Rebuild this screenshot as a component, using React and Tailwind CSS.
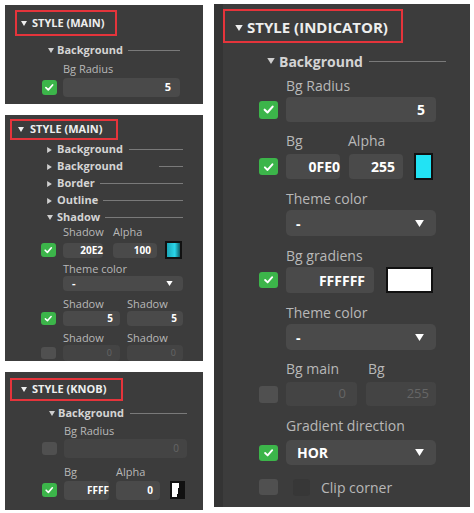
import React from "react";

const font = { fontFamily: '"Open Sans", "Noto Sans", sans-serif' };

function DownTri({ className }) {
    return (
        <svg viewBox="0 0 10 8" className={className}>
            <polygon points="0,0 10,0 5,8" fill="currentColor" />
        </svg>
    );
}

function RightTri({ className }) {
    return (
        <svg viewBox="0 0 8 10" className={className}>
            <polygon points="0,0 8,5 0,10" fill="currentColor" />
        </svg>
    );
}

function Check({ on, className }) {
    if (!on) {
        return <div className={"shrink-0 rounded-[3px] bg-[#505050] " + className} />;
    }
    return (
        <div className={"flex shrink-0 items-center justify-center rounded-[3px] bg-[#3cb54a] " + className}>
            <svg viewBox="0 0 12 12" className="h-[70%] w-[70%]">
                <path d="M2.2 6.4 L4.9 9 L9.8 3.4" fill="none" stroke="white" strokeWidth="2" strokeLinecap="round" strokeLinejoin="round" />
            </svg>
        </div>
    );
}

function Field({ value, className, dim }) {
    return (
        <div className={"flex shrink-0 items-center justify-end rounded-[4px] " + (dim ? "bg-[#444444] text-[#666666] font-normal " : "bg-[#4a4a4a] text-white font-bold ") + className}>
            {value}
        </div>
    );
}

function Folder({ label, open, rowClass, triClass, textClass, lineClass }) {
    return (
        <div className={"flex items-center " + rowClass}>
            {open ? <DownTri className={"shrink-0 text-[#cfcfcf] " + triClass} /> : <RightTri className={"shrink-0 text-[#cfcfcf] " + triClass} />}
            <span className={"font-bold text-[#d4d4d4] " + textClass}>{label}</span>
            <div className={"h-px flex-1 bg-[#7a7a7a] " + lineClass} />
        </div>
    );
}

function SmallPanelMain() {
    return (
        <div className="h-[99px] bg-[#3c3c3c] pt-[5px]">
            <div className="ml-[10px] flex h-[26px] w-[102px] items-center border-2 border-[#e5343b] pl-[4px]">
                <DownTri className="h-[5px] w-[6px] text-[#eeeeee]" />
                <span className="ml-[5px] text-[11px] font-bold text-[#eeeeee]">STYLE (MAIN)</span>
            </div>
            <Folder label="Background" open rowClass="mt-[6px] h-[16px] pl-[43px] pr-[23px]" triClass="h-[5px] w-[6px]" textClass="ml-[3px] text-[11px]" lineClass="ml-[5px]" />
            <div className="mt-[3px] flex h-[16px] items-center pl-[58px] text-[11px] text-[#b8b8b8]">Bg Radius</div>
            <div className="mt-[1px] flex h-[19px] items-center pl-[37px]">
                <Check on className="h-[15px] w-[15px]" />
                <Field value="5" className="ml-[6px] h-[19px] w-[117px] pr-[9px] text-[11px]" />
            </div>
        </div>
    );
}

function SmallPanelShadow() {
    return (
        <div className="h-[246px] bg-[#3c3c3c] pt-[4px]">
            <div className="ml-[5px] flex h-[21px] w-[108px] items-center border-2 border-[#e5343b] pl-[6px]">
                <DownTri className="h-[5px] w-[6px] text-[#eeeeee]" />
                <span className="ml-[6px] text-[11px] font-bold text-[#eeeeee]">STYLE (MAIN)</span>
            </div>
            <div className="mt-[1px]">
                <Folder label="Background" rowClass="h-[17px] pl-[42px] pr-[20px]" triClass="h-[6px] w-[5px]" textClass="ml-[5px] text-[11px]" lineClass="ml-[6px]" />
                <Folder label="Background" rowClass="h-[17px] pl-[42px] pr-[20px]" triClass="h-[6px] w-[5px]" textClass="ml-[5px] text-[11px]" lineClass="ml-[36px]" />
                <Folder label="Border" rowClass="h-[17px] pl-[42px] pr-[20px]" triClass="h-[6px] w-[5px]" textClass="ml-[5px] text-[11px]" lineClass="ml-[5px]" />
                <Folder label="Outline" rowClass="h-[17px] pl-[42px] pr-[20px]" triClass="h-[6px] w-[5px]" textClass="ml-[5px] text-[11px]" lineClass="ml-[5px]" />
                <Folder label="Shadow" open rowClass="h-[17px] pl-[42px] pr-[20px]" triClass="h-[5px] w-[6px]" textClass="ml-[4px] text-[11px]" lineClass="ml-[5px]" />
            </div>
            <div className="mt-[-1px] flex h-[14px] items-center text-[11px] text-[#b8b8b8]">
                <span className="ml-[58px] w-[50px]">Shadow</span>
                <span>Alpha</span>
            </div>
            <div className="mt-[2px] flex h-[18px] items-center pl-[36px]">
                <Check on className="h-[14px] w-[15px]" />
                <Field value="20E2" className="ml-[7px] h-[15px] w-[40px] justify-center text-[10px]" />
                <Field value="100" className="ml-[10px] h-[15px] w-[44px] pr-[6px] text-[10px]" />
                <div className="ml-[8px] h-[18px] w-[17px] border-2 border-[#111111] bg-[linear-gradient(90deg,#1aa6b8,#2ad7ea_60%,#0d5c66)]" />
            </div>
            <div className="mt-[3px] flex h-[14px] items-center pl-[58px] text-[11px] text-[#b8b8b8]">Theme color</div>
            <div className="ml-[58px] flex h-[15px] w-[120px] items-center justify-between rounded-[4px] bg-[#4a4a4a] pl-[9px] pr-[10px] text-[11px] font-bold text-white">
                <span>-</span>
                <DownTri className="h-[5px] w-[7px] text-white" />
            </div>
            <div className="mt-[6px] flex h-[14px] items-center text-[11px] text-[#b8b8b8]">
                <span className="ml-[58px] w-[64px]">Shadow</span>
                <span>Shadow</span>
            </div>
            <div className="flex h-[15px] items-center pl-[36px]">
                <Check on className="h-[13px] w-[15px]" />
                <Field value="5" className="ml-[7px] h-[15px] w-[57px] pr-[7px] text-[10px]" />
                <Field value="5" className="ml-[7px] h-[15px] w-[56px] pr-[6px] text-[10px]" />
            </div>
            <div className="mt-[5px] flex h-[14px] items-center text-[11px] text-[#b8b8b8]">
                <span className="ml-[58px] w-[64px]">Shadow</span>
                <span>Shadow</span>
            </div>
            <div className="flex h-[16px] items-center pl-[36px]">
                <Check className="h-[12px] w-[15px]" />
                <Field dim value="0" className="ml-[7px] h-[16px] w-[57px] pr-[8px] text-[9px]" />
                <Field dim value="0" className="ml-[7px] h-[16px] w-[56px] pr-[7px] text-[9px]" />
            </div>
        </div>
    );
}

function SmallPanelKnob() {
    return (
        <div className="h-[138px] bg-[#3c3c3c] pt-[6px]">
            <div className="ml-[5px] flex h-[23px] w-[113px] items-center border-2 border-[#e5343b] pl-[9px]">
                <DownTri className="h-[5px] w-[6px] text-[#eeeeee]" />
                <span className="ml-[5px] text-[11px] font-bold text-[#eeeeee]">STYLE (KNOB)</span>
            </div>
            <Folder label="Background" open rowClass="mt-[4px] h-[16px] pl-[44px] pr-[16px]" triClass="h-[5px] w-[6px]" textClass="ml-[3px] text-[11px]" lineClass="ml-[6px]" />
            <div className="mt-[2px] flex h-[16px] items-center pl-[59px] text-[11px] text-[#b8b8b8]">Bg Radius</div>
            <div className="flex h-[19px] items-center pl-[37px]">
                <Check className="h-[13px] w-[15px]" />
                <Field dim value="0" className="ml-[7px] h-[19px] w-[123px] pr-[8px] text-[10px]" />
            </div>
            <div className="mt-[7px] flex h-[14px] items-center text-[11px] text-[#b8b8b8]">
                <span className="ml-[59px] w-[52px]">Bg</span>
                <span>Alpha</span>
            </div>
            <div className="mt-[1px] flex h-[20px] items-center pl-[37px]">
                <Check on className="h-[14px] w-[15px]" />
                <Field value="FFFF" className="ml-[7px] h-[19px] w-[45px] justify-center text-[10px]" />
                <Field value="0" className="ml-[7px] h-[19px] w-[44px] pr-[7px] text-[10px]" />
                <div className="ml-[10px] h-[18px] w-[15px] border-2 border-[#111111] bg-[linear-gradient(100deg,#ffffff_55%,#111111_55%)]" />
            </div>
        </div>
    );
}

function IndicatorPanel() {
    return (
        <div className="h-[503px] w-[256px] border-l-[9px] border-[#343434] bg-[#3c3c3c] pt-[5px]">
            <div className="flex h-[34px] w-[180px] items-center border-2 border-[#e5343b] pl-[10px] pt-[3px]">
                <DownTri className="h-[6px] w-[8px] text-[#eeeeee]" />
                <span className="ml-[4px] text-[15px] font-bold text-[#eeeeee]">STYLE (INDICATOR)</span>
            </div>
            <Folder label="Background" open rowClass="mt-[10px] h-[16px] pl-[44px] pr-[24px]" triClass="h-[6px] w-[8px]" textClass="ml-[4px] text-[14px]" lineClass="ml-[6px]" />
            <div className="mt-[8px] flex h-[16px] items-center pl-[63px] text-[14px] text-[#b8b8b8]">Bg Radius</div>
            <div className="mt-[4px] flex h-[25px] items-center pl-[36px]">
                <Check on className="h-[18px] w-[19px]" />
                <Field value="5" className="ml-[8px] h-[25px] w-[150px] pr-[11px] text-[14px]" />
            </div>
            <div className="mt-[10px] flex h-[16px] items-center text-[14px] text-[#b8b8b8]">
                <span className="ml-[63px] w-[62px]">Bg</span>
                <span>Alpha</span>
            </div>
            <div className="mt-[5px] flex h-[27px] items-center pl-[36px]">
                <Check on className="h-[17px] w-[19px]" />
                <Field value="0FE0" className="ml-[8px] h-[25px] w-[54px] justify-center text-[14px]" />
                <Field value="255" className="ml-[9px] h-[25px] w-[54px] pr-[8px] text-[14px]" />
                <div className="ml-[11px] h-[27px] w-[19px] border-2 border-[#111111] bg-[#22e3f4]" />
            </div>
            <div className="mt-[10px] flex h-[16px] items-center pl-[63px] text-[14px] text-[#b8b8b8]">Theme color</div>
            <div className="ml-[63px] mt-[4px] flex h-[26px] w-[150px] items-center justify-between rounded-[5px] bg-[#4a4a4a] pl-[10px] pr-[12px] text-[14px] font-bold text-white">
                <span>-</span>
                <DownTri className="h-[7px] w-[9px] text-white" />
            </div>
            <div className="mt-[11px] flex h-[16px] items-center pl-[63px] text-[14px] text-[#b8b8b8]">Bg gradiens</div>
            <div className="mt-[4px] flex h-[26px] items-center pl-[36px]">
                <Check on className="h-[16px] w-[19px]" />
                <Field value="FFFFFF" className="ml-[8px] h-[26px] w-[88px] pr-[9px] text-[14px]" />
                <div className="ml-[12px] h-[26px] w-[47px] border-2 border-[#111111] bg-white" />
            </div>
            <div className="mt-[11px] flex h-[16px] items-center pl-[63px] text-[14px] text-[#b8b8b8]">Theme color</div>
            <div className="ml-[63px] mt-[4px] flex h-[26px] w-[150px] items-center justify-between rounded-[5px] bg-[#4a4a4a] pl-[10px] pr-[12px] text-[14px] font-bold text-white">
                <span>-</span>
                <DownTri className="h-[7px] w-[9px] text-white" />
            </div>
            <div className="mt-[10px] flex h-[16px] items-center text-[14px] text-[#b8b8b8]">
                <span className="ml-[63px] w-[82px]">Bg main</span>
                <span>Bg</span>
            </div>
            <div className="mt-[6px] flex h-[24px] items-center pl-[36px]">
                <Check className="h-[17px] w-[19px]" />
                <Field dim value="0" className="ml-[8px] h-[24px] w-[71px] pr-[11px] text-[13px]" />
                <Field dim value="255" className="ml-[9px] h-[24px] w-[70px] pr-[7px] text-[13px]" />
            </div>
            <div className="mt-[11px] flex h-[16px] items-center pl-[63px] text-[14px] text-[#b8b8b8]">Gradient direction</div>
            <div className="mt-[7px] flex h-[25px] items-center pl-[36px]">
                <Check on className="h-[16px] w-[19px]" />
                <div className="ml-[8px] flex h-[25px] w-[150px] items-center justify-between rounded-[5px] bg-[#4a4a4a] pl-[11px] pr-[12px] text-[14px] font-bold text-white">
                    <span>HOR</span>
                    <DownTri className="h-[7px] w-[9px] text-white" />
                </div>
            </div>
            <div className="mt-[13px] flex h-[18px] items-center pl-[36px]">
                <Check className="h-[16px] w-[19px]" />
                <div className="ml-[15px] h-[17px] w-[17px] rounded-[3px] bg-[#373737]" />
                <span className="ml-[11px] text-[14px] text-[#b8b8b8]">Clip corner</span>
            </div>
        </div>
    );
}

export default function App() {
    return (
        <div className="flex h-[513px] w-[474px] gap-[11px] bg-white" style={font}>
            <div className="ml-[5px] mt-[5px] flex w-[198px] flex-col gap-[11px]">
                <SmallPanelMain />
                <SmallPanelShadow />
                <SmallPanelKnob />
            </div>
            <div className="mt-[4px]">
                <IndicatorPanel />
            </div>
        </div>
    );
}
